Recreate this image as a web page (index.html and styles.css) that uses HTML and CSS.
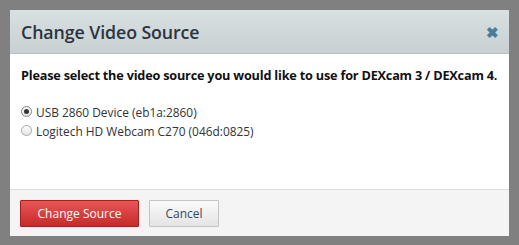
FILE: index.html
```html
<!DOCTYPE html>
<html>
<head>
<meta charset="utf-8">
<link rel="stylesheet" href="styles.css">
</head>
<body>
<div class="dialog">
  <div class="header">
    <h1 class="title">Change Video Source</h1>
    <span class="close">&#x2716;</span>
  </div>
  <div class="body">
    <p class="prompt">Please select the video source you would like to use for DEXcam 3 / DEXcam 4.</p>
    <label class="opt"><span class="radio checked"></span>USB 2860 Device (eb1a:2860)</label>
    <label class="opt"><span class="radio"></span>Logitech HD Webcam C270 (046d:0825)</label>
  </div>
  <div class="footer">
    <button class="btn primary">Change Source</button>
    <button class="btn">Cancel</button>
  </div>
</div>
</body>
</html>
```
FILE: styles.css
```css
html, body { margin: 0; padding: 0; }
body {
  background: #808080;
  width: 519px;
  height: 245px;
  padding: 10px;
  box-sizing: border-box;
  font-family: "Open Sans", "Noto Sans", sans-serif;
}
.dialog {
  width: 499px;
  height: 226px;
  background: #fff;
  display: flex;
  flex-direction: column;
}
.header {
  height: 43px;
  border-bottom: 1px solid #b9bfc1;
  background: linear-gradient(#d9e0e1, #c8d0d2);
  display: flex;
  align-items: center;
  justify-content: space-between;
  padding: 0 10px 0 11px;
}
.title {
  margin: 0;
  font-size: 17.8px;
  font-weight: 600;
  color: #2b3440;
  letter-spacing: -0.1px;
}
.close {
  color: #4a7c9a;
  font-size: 15px;
  font-weight: bold;
}
.body {
  flex: 1;
  padding: 12px 11px 0;
}
.prompt {
  margin: 0 0 18px;
  font-size: 12.7px;
  font-weight: 700;
  color: #111;
  letter-spacing: -0.2px;
}
.opt {
  display: flex;
  align-items: center;
  font-size: 11.9px;
  color: #333;
  height: 19px;
}
.radio {
  width: 11px;
  height: 11px;
  border: 1px solid #a8a8a8;
  border-radius: 50%;
  box-sizing: border-box;
  margin-right: 4px;
  background: linear-gradient(#fdfdfd, #e6e6e6);
  position: relative;
}
.radio.checked { border-color: #888; }
.radio.checked::after {
  content: "";
  position: absolute;
  left: 2px; top: 2px;
  width: 5px; height: 5px;
  border-radius: 50%;
  background: #333;
}
.footer {
  height: 46px;
  border-top: 1px solid #dcdcdc;
  background: #f4f4f4;
  display: flex;
  align-items: center;
  gap: 10px;
  padding: 0 10px;
}
.btn {
  height: 27px;
  padding: 0 14px;
  font-family: inherit;
  font-size: 12px;
  color: #34495e;
  border: 1px solid #c4c4c4;
  background: linear-gradient(#fafafa, #e4e4e4);
  border-radius: 1px;
  width: 70px;
}
.btn.primary {
  width: 119px;
  color: #fff;
  border-color: #a51f1f;
  background: linear-gradient(#e85555, #c62b2b);
}
```
